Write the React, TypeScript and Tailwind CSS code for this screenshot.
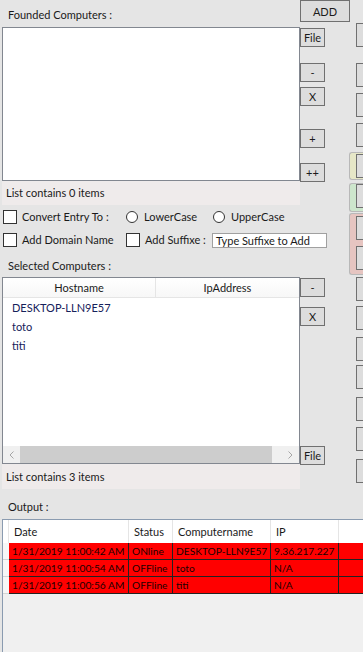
import React from "react";

const btn =
  "flex items-center justify-center border border-[#707070] bg-[#dddddd] leading-none text-[#1b1b1b]";

function SmallButton({ label, className = "" }: { label: string; className?: string }) {
  return <div className={`${btn} h-[19px] w-[25px] ${className}`}>{label}</div>;
}

function StripButton({ className = "" }: { className?: string }) {
  return <div className={`h-[24px] w-[30px] shrink-0 border border-[#707070] bg-[#dddddd] ${className}`} />;
}

function CheckBox() {
  return <span className="h-[14px] w-[14px] shrink-0 border border-[#333333] bg-white" />;
}

function Radio() {
  return <span className="h-[12px] w-[12px] shrink-0 rounded-full border border-[#333333] bg-white" />;
}

function Chevron({ dir }: { dir: "left" | "right" }) {
  return (
    <svg width="5" height="8" viewBox="0 0 5 8" fill="none">
      <path
        d={dir === "left" ? "M4.5 0.5 L1 4 L4.5 7.5" : "M0.5 0.5 L4 4 L0.5 7.5"}
        stroke="#a6a6a6"
        strokeWidth="1"
      />
    </svg>
  );
}

const selected = ["DESKTOP-LLN9E57", "toto", "titi"];

const output = [
  { date: "1/31/2019 11:00:42 AM", status: "ONline", name: "DESKTOP-LLN9E57", ip: "9.36.217.227" },
  { date: "1/31/2019 11:00:54 AM", status: "OFFline", name: "toto", ip: "N/A" },
  { date: "1/31/2019 11:00:56 AM", status: "OFFline", name: "titi", ip: "N/A" },
];

const cols = [
  { key: "date", label: "Date", w: "w-[120px]" },
  { key: "status", label: "Status", w: "w-[44px]" },
  { key: "name", label: "Computername", w: "w-[98px]" },
  { key: "ip", label: "IP", w: "w-[68px]" },
] as const;

export default function App() {
  return (
    <div className="flex h-[652px] w-[363px] flex-col overflow-hidden whitespace-nowrap bg-[#e5e5e5] font-['Lato',sans-serif] text-[11px] leading-[16px] text-[#1a1a1a]">
      {/* top area */}
      <div className="flex h-[489px] shrink-0">
        {/* left column */}
        <div className="ml-[2px] flex w-[298px] shrink-0 flex-col">
          <div className="h-[27px] pl-[6px] pt-[7px]">Founded Computers :</div>
          <div className="h-[154px] border border-[#828790] bg-white" />
          <div className="flex h-[24px] items-center bg-[#efebeb] pl-[4px]">List contains 0 items</div>

          <div className="flex h-[23px] items-center pl-[1px]">
            <CheckBox />
            <span className="ml-[5px] w-[104px] shrink-0">Convert Entry To :</span>
            <Radio />
            <span className="ml-[6px] w-[69px] shrink-0">LowerCase</span>
            <Radio />
            <span className="ml-[6px] shrink-0">UpperCase</span>
          </div>

          <div className="flex h-[24px] items-center pl-[1px]">
            <CheckBox />
            <span className="ml-[5px] w-[104px] shrink-0">Add Domain Name</span>
            <CheckBox />
            <span className="ml-[5px] w-[67px] shrink-0">Add Suffixe :</span>
            <div className="flex h-[15px] w-[115px] shrink-0 items-center border border-[#a0a0a0] bg-white pl-[3px] leading-none">
              Type Suffixe to Add
            </div>
          </div>

          <div className="h-[25px] pl-[6px] pt-[6px]">Selected Computers :</div>

          <div className="flex h-[187px] flex-col border border-[#828790] bg-white">
            <div className="flex h-[20px] shrink-0 border-b border-[#e5e5e5] bg-gradient-to-b from-white to-[#f7f7f7]">
              <div className="flex w-[153px] items-center justify-center border-r border-[#e5e5e5]">Hostname</div>
              <div className="flex flex-1 items-center justify-center">IpAddress</div>
            </div>
            {selected.map((h) => (
              <div key={h} className="flex h-[19px] items-center pl-[9px] text-[#15215a]">
                {h}
              </div>
            ))}
            <div className="flex-1" />
            <div className="flex h-[17px] shrink-0 bg-[#f0f0f0]">
              <div className="flex w-[17px] items-center justify-center">
                <Chevron dir="left" />
              </div>
              <div className="w-[252px] bg-[#cdcdcd]" />
              <div className="flex flex-1 items-center justify-end pr-[6px]">
                <Chevron dir="right" />
              </div>
            </div>
          </div>

          <div className="flex h-[25px] items-center bg-[#efebeb] pl-[4px]">List contains 3 items</div>
        </div>

        {/* middle buttons */}
        <div className="flex w-[49px] shrink-0 flex-col items-start">
          <div className={`${btn} h-[22px] w-[50px] shrink-0`}>ADD</div>
          <SmallButton label="File" className="mt-[6px]" />
          <SmallButton label="-" className="mt-[16px]" />
          <SmallButton label="X" className="mt-[5px]" />
          <SmallButton label="+" className="mt-[23px]" />
          <SmallButton label="++" className="mt-[15px]" />
          <SmallButton label="-" className="mt-[96px]" />
          <SmallButton label="X" className="mt-[10px]" />
          <SmallButton label="File" className="mt-[120px]" />
        </div>

        {/* right strip */}
        <div className="flex w-[14px] shrink-0 flex-col overflow-hidden pt-[23px]">
          <StripButton className="ml-[7px]" />
          <StripButton className="ml-[7px] mt-[16px]" />
          <StripButton className="ml-[7px] mt-[6px]" />
          <StripButton className="ml-[7px] mt-[6px]" />
          <div className="mt-[5px] h-[28px] shrink-0 rounded-l-[3px] border border-r-0 border-[#b8b8b8] bg-[#e6e7c7] pl-[6px] pt-[1px]">
            <StripButton />
          </div>
          <div className="mt-[3px] h-[29px] shrink-0 rounded-l-[3px] border border-r-0 border-[#b8b8b8] bg-[#cde6cc] pl-[6px]">
            <StripButton />
          </div>
          <div className="mt-[1px] h-[62px] shrink-0 rounded-l-[3px] border border-r-0 border-[#b8b8b8] bg-[#e6c5c1] pl-[6px] pt-[2px]">
            <StripButton />
            <StripButton className="mt-[6px]" />
          </div>
          <StripButton className="ml-[7px] mt-[2px]" />
          <StripButton className="ml-[7px] mt-[5px]" />
          <StripButton className="ml-[7px] mt-[7px]" />
          <StripButton className="ml-[7px] mt-[4px]" />
          <StripButton className="ml-[7px] mt-[8px]" />
          <StripButton className="ml-[7px] mt-[6px]" />
          <StripButton className="ml-[7px] mt-[8px]" />
        </div>
      </div>

      {/* output */}
      <div className="h-[30px] shrink-0 pl-[8px] pt-[10px]">Output :</div>
      <div className="ml-[2px] flex flex-1 flex-col border-l border-t border-[#8a9bb0] bg-[#f0f0f0]">
        <div className="flex h-[23px] shrink-0 bg-white">
          <div className="w-[6px] shrink-0 border-r border-[#e5e5e5]" />
          {cols.map((c) => (
            <div key={c.key} className={`${c.w} flex shrink-0 items-center border-r border-[#e5e5e5] pl-[5px]`}>
              {c.label}
            </div>
          ))}
          <div className="flex-1" />
        </div>
        {output.map((r) => (
          <div key={r.date} className="flex h-[17px] shrink-0">
            <div className="w-[6px] shrink-0 border-b border-[#d5d5d5] bg-[#f7f7f7]" />
            <div className="flex flex-1 border-b border-[#222222] bg-[#ff0000] text-[10.2px] text-[#1a0000]">
              {cols.map((c) => (
                <div
                  key={c.key}
                  className={`${c.w} flex shrink-0 items-center overflow-hidden border-r border-[#222222] pl-[3px] leading-none`}
                >
                  {r[c.key]}
                </div>
              ))}
              <div className="flex-1" />
            </div>
          </div>
        ))}
      </div>
    </div>
  );
}
